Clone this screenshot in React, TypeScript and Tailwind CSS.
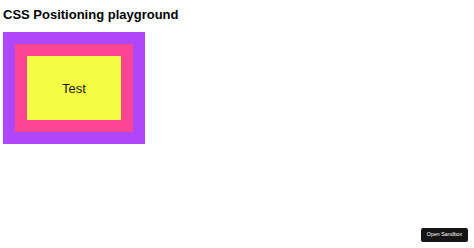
export default function App() {
  return (
    <div className="relative h-[248px] w-[474px] bg-white" style={{ fontFamily: '"Liberation Sans", Arial, sans-serif' }}>
      <div className="pl-[3px] pt-[7px]">
        <h1 className="text-[13px] font-bold leading-[15px] text-black">CSS Positioning playground</h1>
        <div className="mt-[10px] w-[142px] bg-[#b046fa] p-[12px]">
          <div className="bg-[#fd4595] p-[12px]">
            <div className="flex h-[64px] items-center justify-center bg-[#f5fc46]">
              <span className="text-[13px] leading-[15px] text-[#1a1a1a]">Test</span>
            </div>
          </div>
        </div>
      </div>
      <button className="absolute bottom-[6px] right-[6px] flex h-[14px] w-[47px] items-center justify-center rounded-[2px] bg-[#151515] text-[5.3px] text-white">
        Open Sandbox
      </button>
    </div>
  );
}
